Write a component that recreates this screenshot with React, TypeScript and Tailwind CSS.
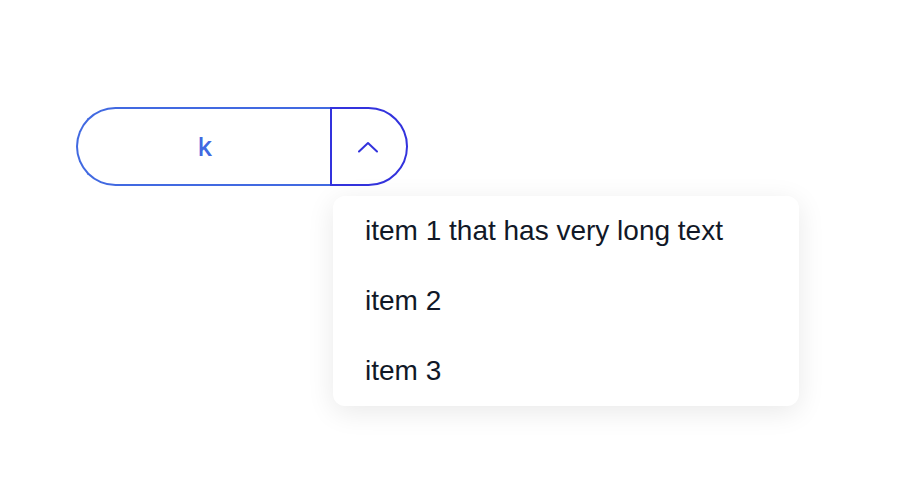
const items = ["item 1 that has very long text", "item 2", "item 3"];

export default function App() {
  return (
    <div className="h-[486px] w-[904px] bg-white pl-[76px] pt-[107px] font-['Liberation_Sans',Arial,sans-serif]">
      <div className="relative flex h-[79px] w-[332px]">
        {/* main button */}
        <button className="flex h-full w-[254px] items-center justify-center rounded-l-full border-2 border-r-0 border-[#4169e1] pl-[2px] font-['Inter',sans-serif] text-[26px] font-medium text-[#4169e1]">
          k
        </button>
        {/* toggle */}
        <button className="flex h-full flex-1 items-center justify-center rounded-r-full border-2 border-[#3333dd] pr-[3px]">
          <svg width="20" height="12" viewBox="0 0 20 12" fill="none">
            <path
              d="M1 10.5 10 2l9 8.5"
              stroke="#3333dd"
              strokeWidth="2"
              strokeLinecap="round"
              strokeLinejoin="round"
            />
          </svg>
        </button>

        {/* dropdown menu */}
        <div className="absolute left-[257px] top-[89px] w-[466px] rounded-xl bg-white shadow-[0_6px_28px_rgba(0,0,0,0.09)]">
          {items.map((item) => (
            <div
              key={item}
              className="flex h-[70px] items-center px-8 text-[28px] text-[#111827]"
            >
              {item}
            </div>
          ))}
        </div>
      </div>
    </div>
  );
}
